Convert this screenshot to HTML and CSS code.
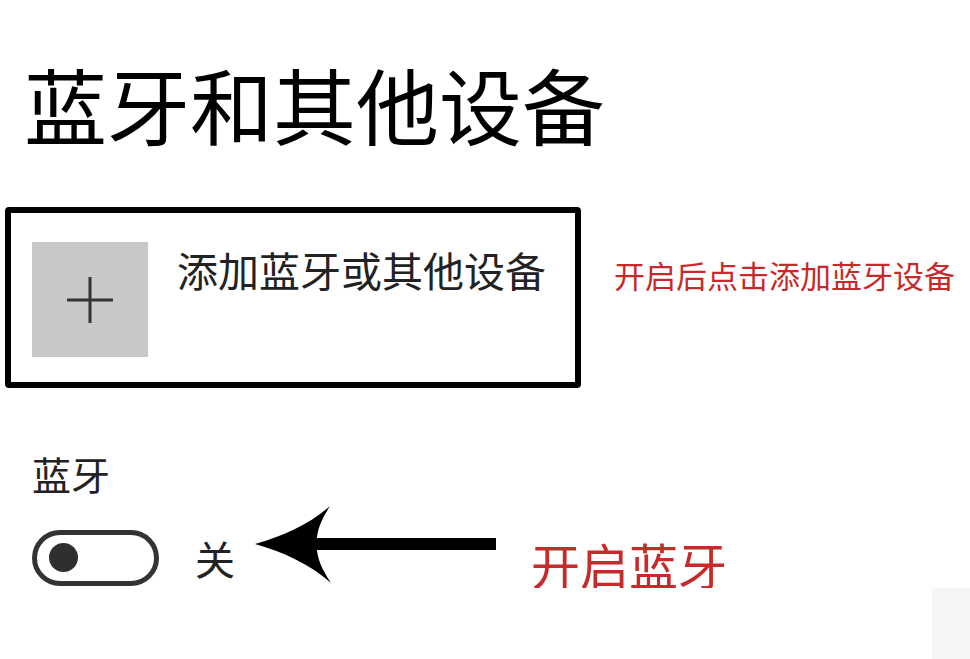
FILE: index.html
```html
<!DOCTYPE html>
<html>
<head>
<meta charset="utf-8">
<title>蓝牙和其他设备</title>
<link rel="stylesheet" href="styles.css">
</head>
<body>

<div class="page">
  <h1 class="page-title">蓝牙和其他设备</h1>

  <div class="add-row">
    <div class="add-card">
      <div class="add-icon">
        <svg width="48" height="48" viewBox="0 0 48 48">
          <path d="M24 1 V47 M1 24 H47" stroke="#333" stroke-width="3" fill="none"/>
        </svg>
      </div>
      <div class="add-label">添加蓝牙或其他设备</div>
    </div>
    <div class="hint">开启后点击添加蓝牙设备</div>
  </div>

  <div class="bt-section">
    <div class="bt-label">蓝牙</div>
    <div class="toggle-row">
      <div class="toggle"><span class="knob"></span></div>
      <span class="state">关</span>
      <!-- pointer arrow -->
      <svg class="arrow" width="242" height="80" viewBox="0 0 242 80">
        <path d="M0 38 C28 30 55 18 75 0 C66 14 61 26 62 38 C61 50 66 62 76 77 C55 58 28 46 0 38 Z" fill="#000"/>
        <rect x="60" y="32" width="181" height="12" fill="#000"/>
      </svg>
      <span class="hint-big">开启蓝牙</span>
    </div>
  </div>
</div>

<div class="stamp"></div>

</body>
</html>
```

FILE: styles.css
```css
body {
    margin: 0;
    background-color: #fff;
    font-family: "Noto Sans CJK SC", "Noto Sans", sans-serif;
    color: #111;
}

.page {
    padding: 62px 0 0 0;
}

.page-title {
    margin: 0 0 0 24px;
    font-size: 83px;
    font-weight: normal;
    line-height: 1;
    color: #000;
}

.add-row {
    display: flex;
    align-items: center;
    margin-top: 62px;
}

.add-card {
    display: flex;
    align-items: flex-start;
    box-sizing: border-box;
    width: 576px;
    height: 181px;
    margin-left: 5px;
    border: 6px solid #000;
    border-radius: 4px;
    padding: 29px 0 0 21px;
}

.add-icon {
    width: 116px;
    height: 115px;
    background-color: #c8c8c8;
    display: flex;
    align-items: center;
    justify-content: center;
}

.add-label {
    margin: 7px 0 0 29px;
    font-size: 41px;
    line-height: 1;
    color: #222;
}

.hint {
    margin: 0 0 46px 33px;
    font-size: 31px;
    line-height: 1;
    color: #c62a2a;
}

.bt-section {
    margin: 66px 0 0 32px;
}

.bt-label {
    font-size: 39px;
    line-height: 1;
    color: #222;
}

.toggle-row {
    display: flex;
    align-items: center;
    margin-top: 34px;
}

.toggle {
    box-sizing: border-box;
    width: 127px;
    height: 56px;
    border: 5px solid #333;
    border-radius: 28px;
    display: flex;
    align-items: center;
    padding-left: 12px;
}

.knob {
    width: 29px;
    height: 29px;
    border-radius: 50%;
    background-color: #2f2f2f;
}

.state {
    margin-left: 36px;
    font-size: 40px;
    line-height: 1;
    color: #222;
}

.arrow {
    margin: -23px 0 0 20px;
}

.hint-big {
    margin: 12px 0 0 34px;
    font-size: 49px;
    line-height: 1;
    color: #c62a2a;
}

/* faint corner mark */
.stamp {
    position: absolute;
    left: 932px;
    top: 588px;
    width: 38px;
    height: 71px;
    background-color: #f6f6f6;
}
```
